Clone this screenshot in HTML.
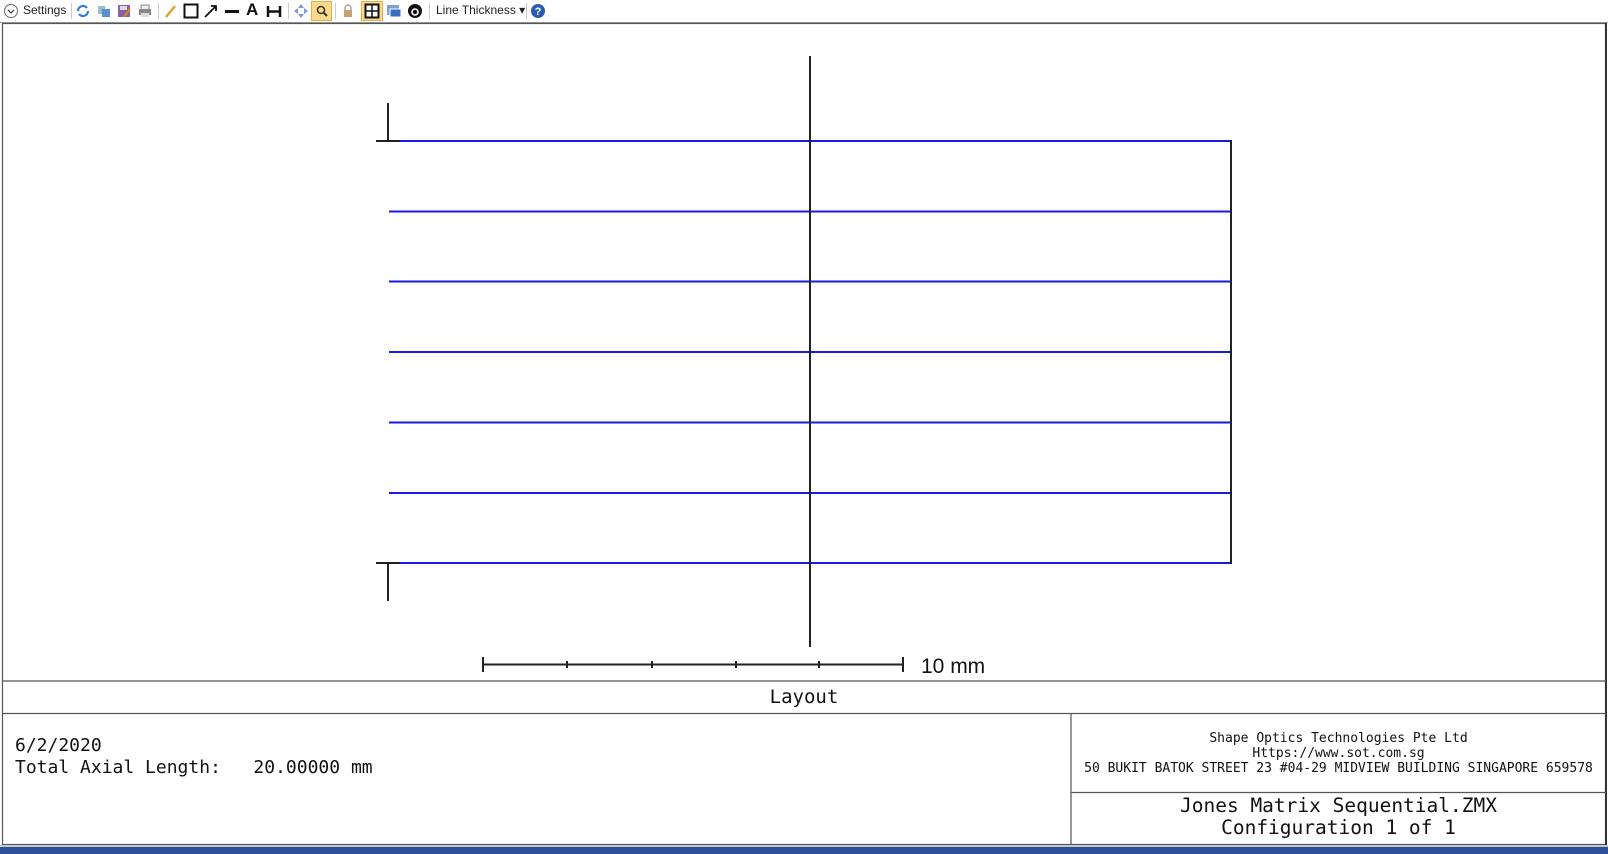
<!DOCTYPE html>
<html><head><meta charset="utf-8"><style>
html,body{margin:0;padding:0;width:1608px;height:854px;overflow:hidden;background:#fff;position:relative;font-family:"Liberation Sans",sans-serif}
.tb{position:absolute;left:0;top:0;width:1608px;height:22px;background:#fff;border-bottom:1px solid #999}
.tb span{position:absolute;top:3px;font-size:12px;color:#222}
.ic{position:absolute;top:3px;width:16px;height:16px}
.sep{position:absolute;top:3px;width:1px;height:16px;background:#ccc}
.mono{font-family:"DejaVu Sans Mono","Liberation Mono",monospace;color:#111;position:absolute;white-space:pre}
</style></head><body>
<div class="tb">
 <svg class="ic" style="left:3px" viewBox="0 0 16 16"><circle cx="8" cy="8" r="6.5" fill="none" stroke="#666"/><path d="M5 7l3 3 3-3" fill="none" stroke="#444" stroke-width="1.3"/></svg>
 <span style="left:23px">Settings</span>
 <div class="sep" style="left:71px"></div>
 <svg class="ic" style="left:75px" viewBox="0 0 16 16"><path d="M3 8a5 5 0 0 1 9-3M13 8a5 5 0 0 1-9 3" fill="none" stroke="#2a7de1" stroke-width="2.2"/></svg>
 <svg class="ic" style="left:96px" viewBox="0 0 16 16"><rect x="2" y="3" width="7" height="8" fill="#9bc" /><rect x="6" y="6" width="8" height="8" fill="#5a8fd0"/></svg>
 <svg class="ic" style="left:116px" viewBox="0 0 16 16"><rect x="2" y="2" width="12" height="12" fill="#8a5fa8"/><rect x="4" y="3" width="7" height="4" fill="#ddd"/><path d="M8 14l6-8" stroke="#c90" stroke-width="2"/></svg>
 <svg class="ic" style="left:137px" viewBox="0 0 16 16"><rect x="4" y="2" width="8" height="5" fill="#eee" stroke="#888"/><rect x="2" y="6" width="12" height="6" fill="#888"/><rect x="4" y="10" width="8" height="4" fill="#ddd"/></svg>
 <div class="sep" style="left:158px"></div>
 <svg class="ic" style="left:163px" viewBox="0 0 16 16"><path d="M3 14l9-11" stroke="#e0a030" stroke-width="2.5"/></svg>
 <svg class="ic" style="left:183px" viewBox="0 0 16 16"><rect x="1.5" y="1.5" width="13" height="13" fill="none" stroke="#111" stroke-width="2"/></svg>
 <svg class="ic" style="left:203px" viewBox="0 0 16 16"><path d="M2 14L13 3M8 3h5v5" fill="none" stroke="#111" stroke-width="1.8"/></svg>
 <svg class="ic" style="left:224px" viewBox="0 0 16 16"><rect x="1" y="7" width="14" height="3" fill="#111"/></svg>
 <span style="left:246px;top:0;font-size:17px;font-weight:bold;color:#111">A</span>
 <svg class="ic" style="left:266px" viewBox="0 0 16 16"><path d="M2 3v11M14 3v11M2 8.5h12" stroke="#111" stroke-width="2.5"/></svg>
 <div class="sep" style="left:288px"></div>
 <svg class="ic" style="left:293px" viewBox="0 0 16 16"><path d="M8 1l3 4H5zM8 15l3-4H5zM1 8l4-3v6zM15 8l-4-3v6z" fill="#7a9ad8"/></svg>
 <div style="position:absolute;left:311px;top:1px;width:21px;height:20px;background:#fbd88a;border:1px solid #e0b050;box-sizing:border-box"></div>
 <svg class="ic" style="left:314px" viewBox="0 0 16 16"><circle cx="7" cy="7" r="3.5" fill="none" stroke="#333" stroke-width="1.5"/><path d="M9.5 9.5l3.5 3.5" stroke="#333" stroke-width="2"/></svg>
 <div class="sep" style="left:335px"></div>
 <svg class="ic" style="left:340px" viewBox="0 0 16 16"><path d="M5 7V5a3 3 0 0 1 6 0v2" fill="none" stroke="#aaa" stroke-width="1.5"/><rect x="4" y="7" width="8" height="7" fill="#c9a070"/></svg>
 <div style="position:absolute;left:361px;top:1px;width:22px;height:20px;background:#fbd88a;border:1px solid #e0b050;box-sizing:border-box"></div>
 <svg class="ic" style="left:364px" viewBox="0 0 16 16"><rect x="1.5" y="1.5" width="13" height="13" fill="#fff" stroke="#111" stroke-width="2"/><path d="M8 2v12M2 8h12" stroke="#111" stroke-width="1.5"/></svg>
 <svg class="ic" style="left:386px" viewBox="0 0 16 16"><rect x="1" y="2" width="12" height="10" fill="#7fa0d0"/><rect x="4" y="6" width="11" height="8" fill="#3a6fc0" stroke="#fff"/></svg>
 <svg class="ic" style="left:407px" viewBox="0 0 16 16"><circle cx="8" cy="8" r="7" fill="#111"/><circle cx="8" cy="9" r="3" fill="none" stroke="#fff" stroke-width="1.6"/></svg>
 <div class="sep" style="left:429px"></div>
 <span style="left:436px">Line Thickness ▾</span>
 <div class="sep" style="left:526px"></div>
 <svg class="ic" style="left:530px" viewBox="0 0 16 16"><circle cx="8" cy="8" r="7" fill="#2a5db0"/><text x="8" y="12" font-size="11" fill="#fff" text-anchor="middle" font-weight="bold" font-family="Liberation Sans">?</text></svg>
</div>

<svg style="position:absolute;left:0;top:0" width="1608" height="854">
 <rect x="2.5" y="23.5" width="1603" height="821" fill="none" stroke="#555" stroke-width="1.2"/>
 <line x1="1606" y1="23" x2="1606" y2="845" stroke="#333" stroke-width="2"/>
 <g stroke="#1a1ae0" stroke-width="2">
  <line x1="389" y1="141" x2="1231" y2="141"/>
  <line x1="389" y1="211.5" x2="1231" y2="211.5"/>
  <line x1="389" y1="281.5" x2="1231" y2="281.5"/>
  <line x1="389" y1="352" x2="1231" y2="352"/>
  <line x1="389" y1="422.5" x2="1231" y2="422.5"/>
  <line x1="389" y1="493" x2="1231" y2="493"/>
  <line x1="389" y1="563" x2="1231" y2="563"/>
 </g>
 <g stroke="#222" stroke-width="2">
  <line x1="810" y1="56" x2="810" y2="647"/>
  <line x1="1231" y1="140" x2="1231" y2="564"/>
  <line x1="388" y1="103" x2="388" y2="141"/>
  <line x1="376" y1="141" x2="400" y2="141"/>
  <line x1="388" y1="563" x2="388" y2="601"/>
  <line x1="376" y1="563" x2="400" y2="563"/>
  <line x1="483" y1="664.5" x2="903" y2="664.5"/>
  <line x1="483" y1="657" x2="483" y2="672"/>
  <line x1="903" y1="657" x2="903" y2="672"/>
  <line x1="567" y1="661" x2="567" y2="668"/>
  <line x1="652" y1="661" x2="652" y2="668"/>
  <line x1="736" y1="661" x2="736" y2="668"/>
  <line x1="819" y1="661" x2="819" y2="668"/>
 </g>
 <text x="921" y="673" font-family="Liberation Sans" font-size="21" fill="#111">10 mm</text>
 <g stroke="#555" stroke-width="1.2">
  <line x1="2" y1="681" x2="1606" y2="681"/>
  <line x1="2" y1="713.5" x2="1606" y2="713.5"/>
  <line x1="1071" y1="713" x2="1071" y2="845"/>
  <line x1="1071" y1="792.5" x2="1606" y2="792.5"/>
 </g>
 <rect x="0" y="845" width="1608" height="2" fill="#c8c8c8"/>
 <rect x="0" y="847" width="1608" height="7" fill="#2b4f9c"/>
</svg>

<div class="mono" style="left:0;width:1608px;top:686px;text-align:center;font-size:19px">Layout</div>
<div class="mono" style="left:15px;top:735px;font-size:18px;line-height:22px">6/2/2020
Total Axial Length:   20.00000 mm</div>
<div class="mono" style="left:1071px;width:535px;top:731px;text-align:center;font-size:13px;line-height:15px">Shape Optics Technologies Pte Ltd
Https://www.sot.com.sg
50 BUKIT BATOK STREET 23 #04-29 MIDVIEW BUILDING SINGAPORE 659578</div>
<div class="mono" style="left:1071px;width:535px;top:795px;text-align:center;font-size:19.5px;line-height:22px">Jones Matrix Sequential.ZMX
Configuration 1 of 1</div>
</body></html>
